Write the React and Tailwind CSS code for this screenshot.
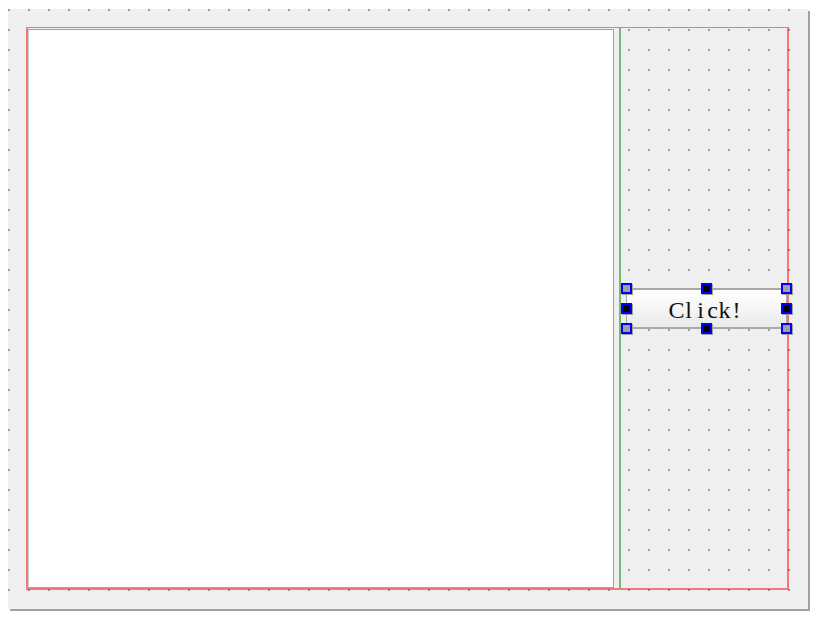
import React from "react";

function Handle({ className, dark = false }) {
  return (
    <span
      className={`absolute w-[11px] h-[11px] border-2 border-[#0000ff] shadow-[1px_1px_0_#a0a0a0] ${
        dark ? "bg-black" : "bg-[#a0a0a0]"
      } ${className}`}
    />
  );
}

function SelectedButton({ label }) {
  return (
    <div className="relative ml-[5px] w-[161px] h-[41px]">
      <button
        className="w-full h-full border-y-2 border-x border-[#a9a9a9] bg-[linear-gradient(#ffffff,#f4f4f4_55%,#e9e9e9)] text-[#111] text-[24px] leading-none flex items-center justify-center pt-[3px]"
        style={{ fontFamily: '"Liberation Serif", "DejaVu Serif", serif' }}
      >
        {label.split("").map((ch, i) => (
          <span key={i} className="w-[12px] flex justify-center">
            {ch}
          </span>
        ))}
      </button>
      <Handle className="-left-[5px] -top-[5px]" />
      <Handle className="left-[75px] -top-[5px]" dark />
      <Handle className="-right-[5px] -top-[5px]" />
      <Handle className="-left-[5px] top-[15px]" dark />
      <Handle className="-right-[5px] top-[15px]" dark />
      <Handle className="-left-[5px] -bottom-[5px]" />
      <Handle className="left-[75px] -bottom-[5px]" dark />
      <Handle className="-right-[5px] -bottom-[5px]" />
    </div>
  );
}

export default function App() {
  return (
    <div className="min-h-screen bg-white pl-[8px] pt-[9px]">
      <div className="w-[800px] h-[600px] bg-[#efefef] bg-[radial-gradient(circle_at_1px_1px,#9c9c9c_1px,transparent_1.4px)] bg-[length:20px_20px] shadow-[2px_2px_0_#a0a0a0] pl-[18px] pt-[18px] pr-[19px] pb-[19px]">
        {/* main horizontal layout */}
        <div className="h-full flex border-l-2 border-b-2 border-r-2 border-t border-[#ff000080]">
          <div className="mt-[1px] w-[587px] h-[559px] bg-white border border-[#a0a0a0] border-l-[#c4ccd4]" />
          <div className="ml-[5px] w-[2px] -mb-[2px] -mt-[1px] bg-[#77b777]" />
          <div className="flex-1 flex flex-col justify-center">
            <SelectedButton label="Click!" />
          </div>
        </div>
      </div>
    </div>
  );
}
